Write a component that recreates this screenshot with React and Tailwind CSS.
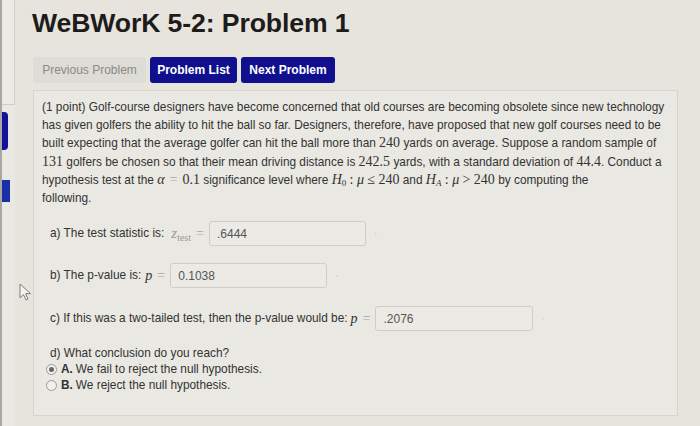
import React from "react";

const M = ({ children, i }) => (
  <span className={`font-['Liberation_Serif','DejaVu_Serif',serif] text-[14px] ${i ? "italic" : ""}`}>{children}</span>
);
const Eq = ({ children }) => (
  <span className="font-['Liberation_Serif','DejaVu_Serif',serif] text-[14px] text-[#a9a9a9] mx-[5px]">{children}</span>
);

const Input = ({ value, w = "w-[157px]" }) => (
  <span className={`inline-flex items-center h-[25px] ${w} border border-[#cfcdc6] rounded-[3px] bg-[#ebeae4] pl-[7px] text-[12px] text-[#555]`}>
    {value}
  </span>
);

export default function App() {
  return (
    <div className="relative w-[700px] h-[426px] overflow-hidden bg-[#e6e4dd] flex font-['Liberation_Sans',Arial,sans-serif]">
      {/* left sidebar remnant */}
      <aside className="w-[15px] shrink-0 flex flex-col border-l-[2px] border-[#a9a7a2] bg-[#e9e8e2]">
        <div className="h-[105px] border-r border-b border-[#cfcdc7] bg-[#ebeae5]" />
        <div className="mt-[7px] h-[38px] w-[6px] rounded-r-[4px] bg-[#12129a]" />
        <div className="mt-[30px] h-[22px] w-[8px] bg-[#1a2ea8]" />
      </aside>

      <main className="pl-[17px] flex flex-col">
        <h1 className="mt-[6px] h-[34px] leading-[34px] text-[26.6px] font-bold text-[#1e1b1b] tracking-[-0.1px]">
          WeBWorK 5-2: Problem 1
        </h1>

        <div className="mt-[17px] flex gap-[4px] ml-[1px]">
          <span className="h-[26px] w-[113px] flex items-center justify-center rounded-[3px] bg-[#dedcd6] text-[12px] text-[#8a8a8a]">
            Previous Problem
          </span>
          <span className="h-[26px] w-[87px] flex items-center justify-center rounded-[3px] bg-[#10108f] text-[12px] font-bold text-white">
            Problem List
          </span>
          <span className="h-[26px] w-[94px] flex items-center justify-center rounded-[3px] bg-[#10108f] text-[12px] font-bold text-white">
            Next Problem
          </span>
        </div>

        <section className="mt-[7px] ml-[1px] w-[645px] h-[326px] border border-[#d6d4cd] bg-[#e9e8e2] pl-[8px] pt-[8px] text-[11.85px] text-[#333]">
          <div className="leading-[17.5px] whitespace-nowrap">
            <div>(1 point) Golf-course designers have become concerned that old courses are becoming obsolete since new technology</div>
            <div>has given golfers the ability to hit the ball so far. Designers, therefore, have proposed that new golf courses need to be</div>
            <div>built expecting that the average golfer can hit the ball more than <M>240</M> yards on average. Suppose a random sample of</div>
            <div><M>131</M> golfers be chosen so that their mean driving distance is <M>242.5</M> yards, with a standard deviation of <M>44.4</M>. Conduct a</div>
            <div>
              hypothesis test at the <M i>α</M><Eq>=</Eq><M>0.1</M> significance level where <M i>H</M><sub className="text-[9px] font-['Liberation_Serif',serif]">0</sub> <M>: </M><M i>μ</M> <M>≤ 240</M> and <M i>H</M><sub className="text-[9px] italic font-['Liberation_Serif',serif]">A</sub> <M>: </M><M i>μ</M> <M>&gt; 240</M> by computing the
            </div>
            <div>following.</div>
          </div>

          <div className="ml-[8px] mt-[14px] flex items-center h-[25px]">
            <span>a) The test statistic is: </span>
            <span className="ml-[7px] text-[#9a9a9a] font-['Liberation_Serif',serif] text-[15px]">
              <span className="italic">z</span>
              <sub className="text-[10px]">test</sub>
            </span>
            <Eq>=</Eq>
            <Input value=".6444" />
            <span className="ml-[8px] text-[#bbb] text-[10px]">·</span>
          </div>

          <div className="ml-[8px] mt-[17px] flex items-center h-[25px]">
            <span>b) The p-value is: </span>
            <span className="ml-[4px]"><M i>p</M></span>
            <Eq>=</Eq>
            <Input value="0.1038" />
            <span className="ml-[8px] text-[#bbb] text-[10px]">·</span>
          </div>

          <div className="ml-[8px] mt-[18px] flex items-center h-[25px]">
            <span>c) If this was a two-tailed test, then the p-value would be: </span>
            <span className="ml-[3px]"><M i>p</M></span>
            <Eq>=</Eq>
            <Input value=".2076" w="w-[158px]" />
            <span className="ml-[8px] text-[#bbb] text-[10px]">·</span>
          </div>

          <div className="ml-[8px] mt-[14px] leading-[16px]">d) What conclusion do you reach?</div>
          <div className="ml-[4px] flex items-center h-[16px] leading-[16px]">
            <span className="w-[11px] h-[11px] rounded-full border border-[#9a9a9a] bg-[#f1f0ec] flex items-center justify-center mr-[4px]">
              <span className="w-[5px] h-[5px] rounded-full bg-[#666]" />
            </span>
            <b className="mr-[3px]">A.</b> We fail to reject the null hypothesis.
          </div>
          <div className="ml-[4px] flex items-center h-[16px] leading-[16px]">
            <span className="w-[11px] h-[11px] rounded-full border border-[#9a9a9a] bg-[#f1f0ec] mr-[4px]" />
            <b className="mr-[3px]">B.</b> We reject the null hypothesis.
          </div>
        </section>
      </main>

      {/* mouse cursor overlay */}
      <svg className="absolute left-[19px] top-[283px]" width="14" height="19" viewBox="0 0 14 19">
        <path d="M1 1 L1 15 L4.5 11.5 L7 17 L9 16 L6.6 10.6 L11.5 10.6 Z" fill="#f4f4f2" stroke="#7d7d7d" strokeWidth="1" strokeLinejoin="round" />
      </svg>
    </div>
  );
}
